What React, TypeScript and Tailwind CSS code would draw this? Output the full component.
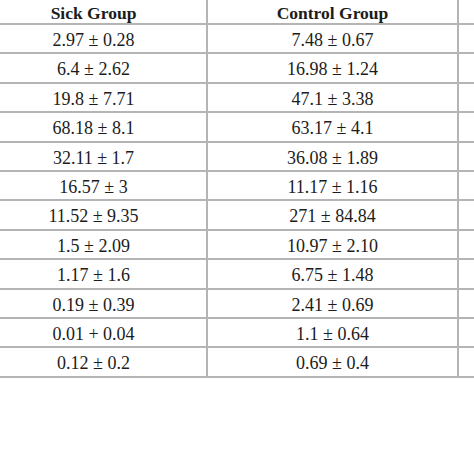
const rows: Array<[string, string]> = [
  ["2.97 ± 0.28", "7.48 ± 0.67"],
  ["6.4 ± 2.62", "16.98 ± 1.24"],
  ["19.8 ± 7.71", "47.1 ± 3.38"],
  ["68.18 ± 8.1", "63.17 ± 4.1"],
  ["32.11 ± 1.7", "36.08 ± 1.89"],
  ["16.57 ± 3", "11.17 ± 1.16"],
  ["11.52 ± 9.35", "271 ± 84.84"],
  ["1.5 ± 2.09", "10.97 ± 2.10"],
  ["1.17 ± 1.6", "6.75 ± 1.48"],
  ["0.19 ± 0.39", "2.41 ± 0.69"],
  ["0.01 + 0.04", "1.1 ± 0.64"],
  ["0.12 ± 0.2", "0.69 ± 0.4"],
];

export default function App() {
  return (
    <div
      className="w-[474px] h-[474px] bg-white text-[#1c1c1c] overflow-hidden"
      style={{ fontFamily: '"Liberation Serif", "Times New Roman", serif' }}
    >
      {/* Header */}
      <div className="grid grid-cols-[208px_251px_15px] h-[25px] border-b-2 border-[#b4b4b4]">
        <div className="border-r-2 border-[#b4b4b4] pr-[19px] flex items-center justify-center text-[17.5px] font-bold">
          Sick Group
        </div>
        <div className="border-r-2 border-[#b4b4b4] flex items-center justify-center text-[17.5px] font-bold">
          Control Group
        </div>
        <div />
      </div>

      {/* Rows */}
      {rows.map(([sick, control], i) => (
        <div
          key={i}
          className="grid grid-cols-[208px_251px_15px] h-[29.4px] border-b-2 border-[#b4b4b4] text-[18px]"
        >
          <div className="border-r-2 border-[#b4b4b4] pr-[19px] pt-[2px] flex items-center justify-center">
            {sick}
          </div>
          <div className="border-r-2 border-[#b4b4b4] pt-[2px] flex items-center justify-center">
            {control}
          </div>
          <div />
        </div>
      ))}
    </div>
  );
}
